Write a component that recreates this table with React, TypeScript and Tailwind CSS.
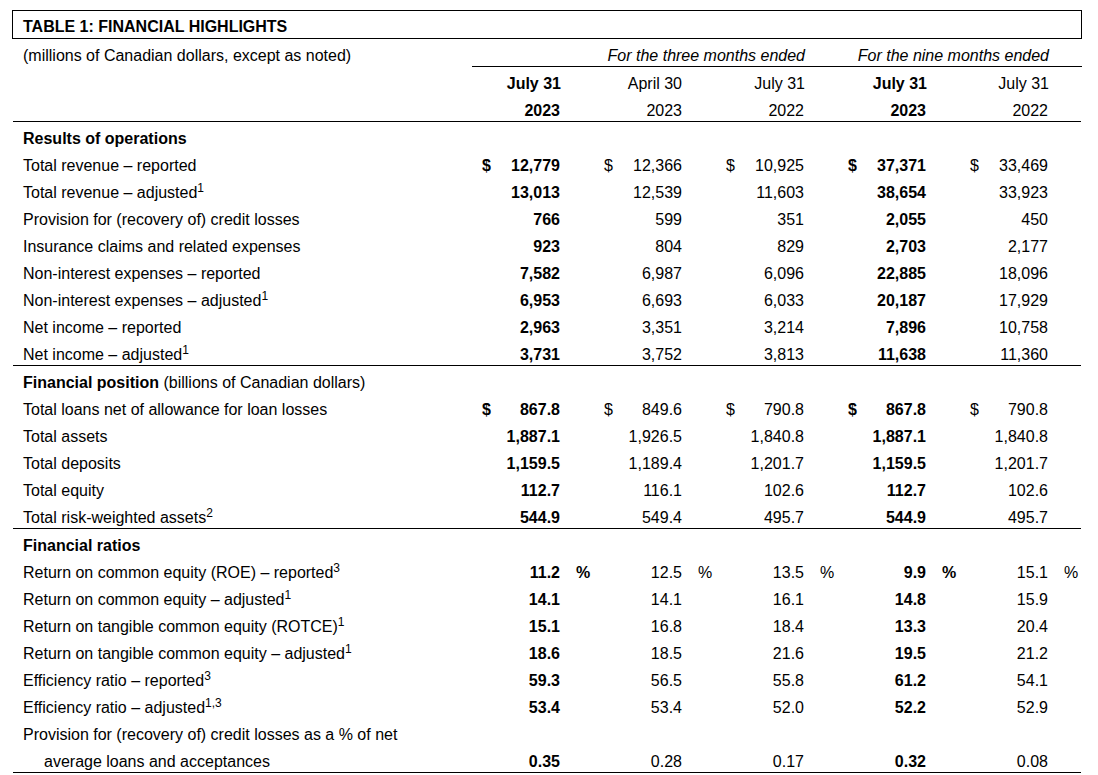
type Row = {
  label: string
  sup?: string
  values?: string[]
  dollar?: boolean
  pct?: boolean
  indent?: boolean
}

const boldCols = [0, 3]

const operations: Row[] = [
  { label: 'Total revenue – reported', values: ['12,779', '12,366', '10,925', '37,371', '33,469'], dollar: true },
  { label: 'Total revenue – adjusted', sup: '1', values: ['13,013', '12,539', '11,603', '38,654', '33,923'] },
  { label: 'Provision for (recovery of) credit losses', values: ['766', '599', '351', '2,055', '450'] },
  { label: 'Insurance claims and related expenses', values: ['923', '804', '829', '2,703', '2,177'] },
  { label: 'Non-interest expenses – reported', values: ['7,582', '6,987', '6,096', '22,885', '18,096'] },
  { label: 'Non-interest expenses – adjusted', sup: '1', values: ['6,953', '6,693', '6,033', '20,187', '17,929'] },
  { label: 'Net income – reported', values: ['2,963', '3,351', '3,214', '7,896', '10,758'] },
  { label: 'Net income – adjusted', sup: '1', values: ['3,731', '3,752', '3,813', '11,638', '11,360'] }
]

const position: Row[] = [
  { label: 'Total loans net of allowance for loan losses', values: ['867.8', '849.6', '790.8', '867.8', '790.8'], dollar: true },
  { label: 'Total assets', values: ['1,887.1', '1,926.5', '1,840.8', '1,887.1', '1,840.8'] },
  { label: 'Total deposits', values: ['1,159.5', '1,189.4', '1,201.7', '1,159.5', '1,201.7'] },
  { label: 'Total equity', values: ['112.7', '116.1', '102.6', '112.7', '102.6'] },
  { label: 'Total risk-weighted assets', sup: '2', values: ['544.9', '549.4', '495.7', '544.9', '495.7'] }
]

const ratios: Row[] = [
  { label: 'Return on common equity (ROE) – reported', sup: '3', values: ['11.2', '12.5', '13.5', '9.9', '15.1'], pct: true },
  { label: 'Return on common equity – adjusted', sup: '1', values: ['14.1', '14.1', '16.1', '14.8', '15.9'] },
  { label: 'Return on tangible common equity (ROTCE)', sup: '1', values: ['15.1', '16.8', '18.4', '13.3', '20.4'] },
  { label: 'Return on tangible common equity – adjusted', sup: '1', values: ['18.6', '18.5', '21.6', '19.5', '21.2'] },
  { label: 'Efficiency ratio – reported', sup: '3', values: ['59.3', '56.5', '55.8', '61.2', '54.1'] },
  { label: 'Efficiency ratio – adjusted', sup: '1,3', values: ['53.4', '53.4', '52.0', '52.2', '52.9'] },
  { label: 'Provision for (recovery of) credit losses as a % of net' },
  { label: 'average loans and acceptances', values: ['0.35', '0.28', '0.17', '0.32', '0.08'], indent: true }
]

const rowClass = 'grid h-[27px] grid-cols-[460px_repeat(5,122px)] pt-[8px] leading-[18px]'

const Line = () => <div className="mx-px h-px bg-black" />

const DataRow = ({ row }: { row: Row }) => (
  <div className={rowClass}>
    <div className={row.indent ? 'pl-[32px]' : 'pl-[11px]'}>
      {row.label}
      {row.sup && <sup className="text-[12px]">{row.sup}</sup>}
    </div>
    {row.values?.map((v, i) => (
      <div key={i} className={`flex ${boldCols.includes(i) ? 'font-bold' : ''}`}>
        <div className="flex w-[88px] justify-between pl-[10px]">
          <span>{row.dollar ? '$' : ''}</span>
          <span>{v}</span>
        </div>
        {row.pct && <span className="pl-[16px]">%</span>}
      </div>
    ))}
  </div>
)

const SectionTitle = ({ children }: { children: React.ReactNode }) => (
  <div className={rowClass}>
    <div className="col-span-6 pl-[11px]">{children}</div>
  </div>
)

export default function App() {
  return (
    <div className="min-h-screen bg-white px-[12px] pt-[10px] font-['Liberation_Sans',Arial,sans-serif] text-[16px] text-black">
      <div className="w-[1070px]">
        {/** Title */}
        <div className="h-[29px] border border-black pl-[10px] pt-[7px] leading-[18px] font-bold">
          TABLE 1: FINANCIAL HIGHLIGHTS
        </div>

        {/** Column headers */}
        <div className="grid h-[28px] grid-cols-[460px_repeat(5,122px)] pt-[8px] leading-[18px]">
          <div className="pl-[11px]">(millions of Canadian dollars, except as noted)</div>
          <div className="border-b border-black" />
          <div className="col-span-2 border-b border-black pr-[33px] text-right italic">
            For the three months ended
          </div>
          <div className="col-span-2 border-b border-black pr-[33px] text-right italic">
            For the nine months ended
          </div>
        </div>
        <div className={rowClass}>
          <div />
          <div className="pr-[33px] text-right font-bold">July 31</div>
          <div className="pr-[34px] text-right">April 30</div>
          <div className="pr-[33px] text-right">July 31</div>
          <div className="pr-[33px] text-right font-bold">July 31</div>
          <div className="pr-[33px] text-right">July 31</div>
        </div>
        <div className={rowClass}>
          <div />
          <div className="pr-[34px] text-right font-bold">2023</div>
          <div className="pr-[34px] text-right">2023</div>
          <div className="pr-[34px] text-right">2022</div>
          <div className="pr-[34px] text-right font-bold">2023</div>
          <div className="pr-[34px] text-right">2022</div>
        </div>
        <Line />

        {/** Results of operations */}
        <SectionTitle>
          <span className="font-bold">Results of operations</span>
        </SectionTitle>
        {operations.map((r) => (
          <DataRow key={r.label} row={r} />
        ))}
        <Line />

        {/** Financial position */}
        <SectionTitle>
          <span className="font-bold">Financial position</span> (billions of Canadian dollars)
        </SectionTitle>
        {position.map((r) => (
          <DataRow key={r.label} row={r} />
        ))}
        <Line />

        {/** Financial ratios */}
        <SectionTitle>
          <span className="font-bold">Financial ratios</span>
        </SectionTitle>
        {ratios.map((r) => (
          <DataRow key={r.label} row={r} />
        ))}
        <Line />
      </div>
    </div>
  )
}
